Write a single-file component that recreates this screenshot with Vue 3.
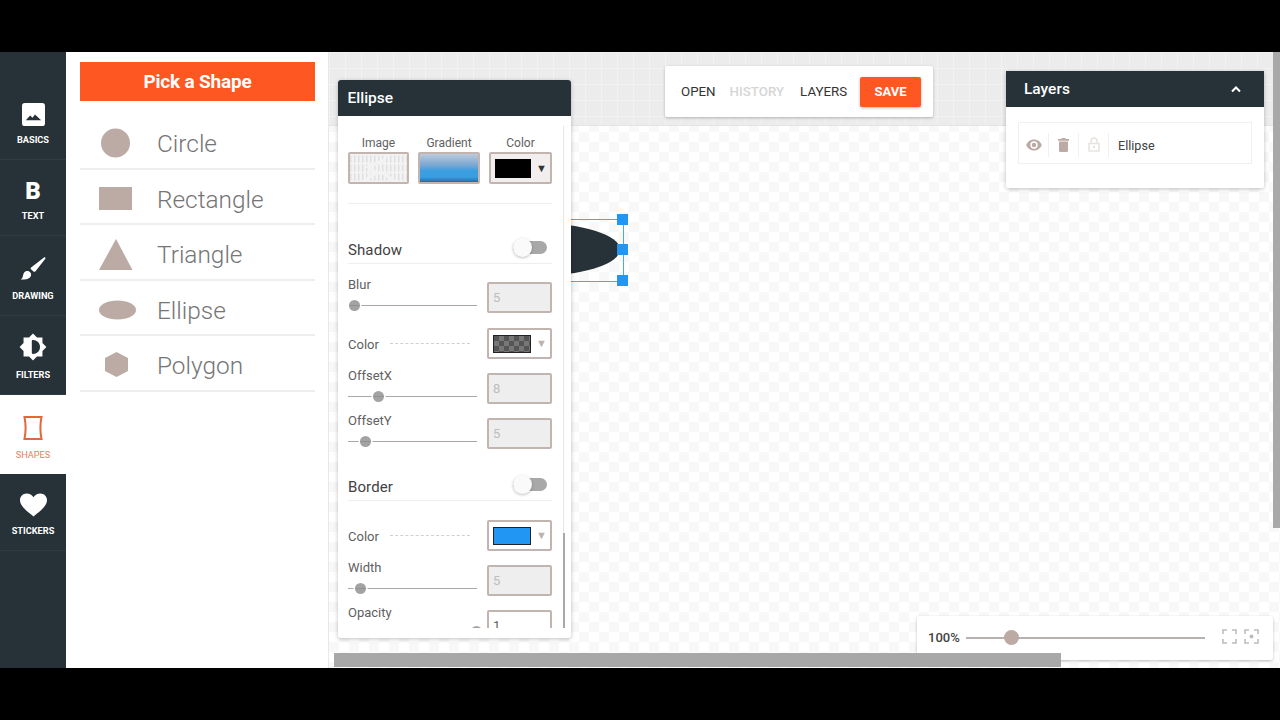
<template>
  <div class="screen">
    <div class="app">
      <nav class="sidebar">
        <div v-for="item in navItems" :key="item.label" class="nav-item" :class="[item.cls, { active: item.active }]">
          <svg v-if="item.icon === 'image'" class="nav-icon" width="23" height="23" viewBox="0 0 24 24">
            <path fill="#fff" d="M3 0h18a3 3 0 0 1 3 3v18a3 3 0 0 1-3 3H3a3 3 0 0 1-3-3V3a3 3 0 0 1 3-3z" />
            <path fill="#263238" d="M4 18l4.500-5 2.500 2.500 2.500-3.500 6.500 6z" />
          </svg>
          <span v-else-if="item.icon === 'bold'" class="nav-bold">B</span>
          <svg v-else-if="item.icon === 'brush'" class="nav-icon" width="26" height="26" viewBox="0 0 26 26">
            <path fill="#fff" d="M24 1.500c1-.6 1.800.3 1.300 1.200L15.500 15.200c-.6.700-1.400.8-2 .3l-2.500-2.200c-.6-.6-.5-1.300.1-1.900z" />
            <path fill="#fff" d="M6.500 15c2.200-.6 5 1.500 4.600 4-.4 3.200-4 5-10.600 4.500 2.500-1.200 2.200-3 2.700-4.800.4-1.800 1.600-3.200 3.300-3.700z" />
          </svg>
          <svg v-else-if="item.icon === 'filter'" class="nav-icon" width="28" height="28" viewBox="0 0 24 24">
            <path fill="#fff" d="M12 .5l3.400 3.400h4.700v4.700L23.500 12l-3.400 3.400v4.700h-4.700L12 23.500l-3.400-3.400H3.900v-4.700L.5 12l3.400-3.400V3.900h4.700z" />
            <path fill="#263238" d="M12 6c3.300 0 6 2.700 6 6s-2.700 6-6 6c-.8 0-1-.2-1-1V7c0-.8.2-1 1-1z" />
          </svg>
          <svg v-else-if="item.icon === 'shape'" class="nav-icon" width="20" height="26" viewBox="0 0 20 26">
            <path fill="none" stroke="#e0683a" stroke-width="2" d="M1.500 2h17c-1.400 7-1.400 15 0 22h-17c1.400-7 1.400-15 0-22z" />
          </svg>
          <svg v-else class="nav-icon" width="27" height="24" viewBox="0 0 28 24">
            <path fill="#fff" d="M14 24C5 16.500 0 12.500 0 7c0-4 3-7 7-7 3 0 5.500 1.500 7 4 1.500-2.500 4-4 7-4 4 0 7 3 7 7 0 5.500-5 9.500-14 17z" />
          </svg>
          <span class="nav-label">{{ item.label }}</span>
        </div>
      </nav>

      <aside class="shape-panel">
        <div class="pick-title">Pick a Shape</div>
        <ul class="shape-list">
          <li v-for="shape in shapes" :key="shape.name" class="shape-row">
            <span class="shape-icon">
              <svg width="36" height="34" viewBox="0 0 36 34">
                <circle v-if="shape.name === 'Circle'" cx="17.500" cy="16" r="14.500" />
                <rect v-else-if="shape.name === 'Rectangle'" x="1" y="5" width="33" height="23" />
                <polygon v-else-if="shape.name === 'Triangle'" points="18,1 34.500,32 1,32" />
                <ellipse v-else-if="shape.name === 'Ellipse'" cx="19.500" cy="17" rx="18.500" ry="9.500" />
                <polygon v-else points="18.500,3 30,9 30,22 18.500,28 7,22 7,9" />
              </svg>
            </span>
            <span class="shape-name">{{ shape.name }}</span>
          </li>
        </ul>
      </aside>

      <main class="canvas">
        <div class="canvas-top"></div>

        <div class="drawn-ellipse"></div>
        <div class="selection">
          <i class="handle h-top"></i>
          <i class="handle h-mid"></i>
          <i class="handle h-bot"></i>
        </div>

        <section class="props">
          <header class="props-head">Ellipse</header>
          <div class="props-body">
            <div class="fill-row">
              <div class="fill-col">
                <label>Image</label>
                <div class="swatch swatch-image">
                  <svg width="57" height="28" viewBox="0 0 57 28">
                    <path fill="none" stroke="#e0e0e0" stroke-width="7" stroke-dasharray="1.500 2.500" d="M0 5h57M0 14h57M0 23h57" />
                    <path fill="none" stroke="#f3f3f3" stroke-width="3" d="M12 28l14-9-8-6 16-7 3-6M46 28L33 19l-7 0" />
                  </svg>
                </div>
              </div>
              <div class="fill-col">
                <label>Gradient</label>
                <div class="swatch swatch-gradient"></div>
              </div>
              <div class="fill-col">
                <label>Color</label>
                <div class="swatch swatch-color">
                  <span class="black-chip"></span>
                  <span class="caret dark">▼</span>
                </div>
              </div>
            </div>

            <div class="section-title first">
              <span class="title-text">Shadow</span>
              <span class="toggle"><i></i></span>
            </div>

            <div class="field">
              <div class="field-left">
                <label>Blur</label>
                <div class="slider"><i :style="{ left: '1px' }"></i></div>
              </div>
              <div class="num">5</div>
            </div>

            <div class="color-field">
              <label>Color</label>
              <span class="dots"></span>
              <div class="pick">
                <span class="chip chip-checker"></span>
                <span class="caret">▼</span>
              </div>
            </div>

            <div class="field tight">
              <div class="field-left">
                <label>OffsetX</label>
                <div class="slider"><i :style="{ left: '25px' }"></i></div>
              </div>
              <div class="num">8</div>
            </div>

            <div class="field tight">
              <div class="field-left">
                <label>OffsetY</label>
                <div class="slider"><i :style="{ left: '12px' }"></i></div>
              </div>
              <div class="num">5</div>
            </div>

            <div class="section-title second">
              <span class="title-text">Border</span>
              <span class="toggle"><i></i></span>
            </div>

            <div class="color-field border-color">
              <label>Color</label>
              <span class="dots"></span>
              <div class="pick">
                <span class="chip chip-blue"></span>
                <span class="caret">▼</span>
              </div>
            </div>

            <div class="field tight">
              <div class="field-left">
                <label>Width</label>
                <div class="slider"><i :style="{ left: '7px' }"></i></div>
              </div>
              <div class="num">5</div>
            </div>

            <div class="field tight opacity-field">
              <div class="field-left">
                <label>Opacity</label>
                <div class="slider"><i :style="{ left: '123px' }"></i></div>
              </div>
              <div class="num on">1</div>
            </div>
          </div>
          <span class="props-track"><i></i></span>
        </section>

        <div class="top-menu">
          <span>OPEN</span>
          <span class="off">HISTORY</span>
          <span>LAYERS</span>
          <button class="save">SAVE</button>
        </div>

        <section class="layers">
          <header class="layers-head">
            <span>Layers</span>
            <svg width="12" height="8" viewBox="0 0 12 8"><path fill="none" stroke="#fff" stroke-width="2" d="M2 6.500l4-4 4 4" /></svg>
          </header>
          <div class="layers-body">
            <div class="layer-row">
              <span class="layer-btn">
                <svg width="16" height="12" viewBox="0 0 16 12"><path fill="#bcaaa4" d="M8 .5C4.500.5 1.500 2.700.2 6c1.300 3.300 4.300 5.500 7.800 5.500s6.500-2.200 7.800-5.500C14.500 2.700 11.500.5 8 .5zm0 9.200A3.700 3.700 0 1 1 8 2.300a3.700 3.700 0 0 1 0 7.400zM8 3.800a2.200 2.200 0 1 0 0 4.400 2.200 2.200 0 0 0 0-4.400z" /></svg>
              </span>
              <span class="layer-btn">
                <svg width="11" height="14" viewBox="0 0 11 14"><path fill="#bcaaa4" d="M1 3.500h9v9A1.500 1.500 0 0 1 8.500 14h-6A1.500 1.500 0 0 1 1 12.500zM0 1h3L4 0h3l1 1h3v1.800H0z" /></svg>
              </span>
              <span class="layer-btn">
                <svg width="12" height="15" viewBox="0 0 12 15"><path fill="none" stroke="#e8e3e1" stroke-width="1.600" d="M1 6.500h10v7.500H1zM3 6.500V4a3 3 0 0 1 6 0v2.500" /><circle cx="6" cy="10" r="1.200" fill="#e8e3e1" /></svg>
              </span>
              <span class="layer-name">Ellipse</span>
            </div>
          </div>
        </section>

        <div class="zoom-bar">
          <span class="zoom-value">100%</span>
          <div class="zoom-track"><i></i></div>
          <svg class="zoom-icon" width="15" height="15" viewBox="0 0 15 15">
            <path fill="none" stroke="#bdbdbd" stroke-width="1.600" d="M1 5V1h4M10 1h4v4M14 10v4h-4M5 14H1v-4" />
          </svg>
          <svg class="zoom-icon" width="15" height="15" viewBox="0 0 15 15">
            <path fill="none" stroke="#bdbdbd" stroke-width="1.600" d="M1 5V1h4M10 1h4v4M14 10v4h-4M5 14H1v-4" />
            <circle cx="7.500" cy="7.500" r="2" fill="#bdbdbd" />
          </svg>
        </div>

        <span class="scroll-h"></span>
        <span class="scroll-v"></span>
      </main>
    </div>
  </div>
</template>

<script setup>
const navItems = [
  { label: 'BASICS', icon: 'image', cls: 'first' },
  { label: 'TEXT', icon: 'bold', cls: 'short' },
  { label: 'DRAWING', icon: 'brush' },
  { label: 'FILTERS', icon: 'filter', cls: 'filters' },
  { label: 'SHAPES', icon: 'shape', active: true },
  { label: 'STICKERS', icon: 'heart', cls: 'stickers' }
]

const shapes = [
  { name: 'Circle' },
  { name: 'Rectangle' },
  { name: 'Triangle' },
  { name: 'Ellipse' },
  { name: 'Polygon' }
]
</script>

<style>
html,
body {
  margin: 0;
  background: #000;
}
</style>

<style scoped>
.screen {
  width: 1280px;
  height: 720px;
  padding: 52px 0;
  box-sizing: border-box;
  background: #000;
  overflow: hidden;
  font-family: Roboto, "Liberation Sans", sans-serif;
}

.app {
  display: flex;
  height: 616px;
}

/* left nav */
.sidebar {
  width: 66px;
  flex: none;
  background: #263238;
  display: flex;
  flex-direction: column;
}

.nav-item {
  height: 80px;
  box-sizing: border-box;
  display: flex;
  flex-direction: column;
  align-items: center;
  justify-content: flex-end;
  padding-bottom: 13px;
  border-bottom: 1px solid #303c43;
  color: #fff;
}

.nav-item.first {
  height: 108px;
}

.nav-item.short {
  height: 76px;
}

.nav-item.filters {
  height: 79px;
}

.nav-item.stickers {
  height: 77px;
}

.nav-item.active {
  background: #fff;
  color: #e0815c;
  border-bottom: 0;
  height: 79px;
}

.nav-icon {
  display: block;
}

.nav-bold {
  font-size: 24px;
  font-weight: 900;
  line-height: 26px;
  margin-bottom: -2px;
}

.nav-label {
  font-size: 9.200px;
  font-weight: 700;
  line-height: 12px;
  margin-top: 8px;
}

.nav-item.active .nav-label {
  font-weight: 400;
}

/* shape chooser */
.shape-panel {
  width: 263px;
  flex: none;
  box-sizing: border-box;
  background: #fff;
  padding: 10px 13px 0 14px;
  border-right: 1px solid #e8e8e8;
}

.pick-title {
  height: 39px;
  line-height: 39px;
  background: #ff5722;
  color: #fff;
  text-align: center;
  font-size: 19px;
  font-weight: 700;
  letter-spacing: -0.2px;
}

.shape-list {
  list-style: none;
  margin: 13px 0 0;
  padding: 0;
}

.shape-row {
  height: 55.500px;
  box-sizing: border-box;
  display: flex;
  align-items: center;
  padding-top: 6px;
  border-bottom: 2px solid #eeeeee;
}

.shape-icon {
  width: 77px;
  padding-left: 18px;
  box-sizing: border-box;
  flex: none;
  display: flex;
}

.shape-icon svg {
  fill: #bcaaa4;
  overflow: visible;
}

.shape-name {
  font-size: 24.400px;
  font-weight: 300;
  color: #757575;
}

/* canvas */
.canvas {
  position: relative;
  flex: 1;
  overflow: hidden;
  background-color: #fff;
  background-image:
    linear-gradient(45deg, #f8f8f8 25%, transparent 25%, transparent 75%, #f8f8f8 75%),
    linear-gradient(45deg, #f8f8f8 25%, transparent 25%, transparent 75%, #f8f8f8 75%);
  background-size: 20px 20px;
  background-position: 0 0, 10px 10px;
}

.canvas-top {
  height: 74px;
  background-color: #ececec;
  background-image:
    linear-gradient(#f2f2f2 1px, transparent 1px),
    linear-gradient(90deg, #f2f2f2 1px, transparent 1px);
  background-size: 16px 16px;
  border-bottom: 1px solid #e4e4e4;
  box-sizing: border-box;
}

.drawn-ellipse {
  position: absolute;
  left: 120px;
  top: 171px;
  width: 171px;
  height: 53px;
  border-radius: 50%;
  background: #263238;
}

.selection {
  position: absolute;
  left: 230px;
  top: 167px;
  width: 63px;
  height: 61px;
  border: 1px solid #4aa8f0;
  box-sizing: content-box;
}

.handle {
  position: absolute;
  right: -5px;
  width: 11px;
  height: 11px;
  background: #2196f3;
}

.h-top {
  top: -6px;
}

.h-mid {
  top: 24px;
}

.h-bot {
  top: 55px;
}

/* properties */
.props {
  position: absolute;
  left: 9px;
  top: 28px;
  width: 233px;
  height: 558px;
  background: #fff;
  border-radius: 3px;
  box-shadow: 0 1px 4px rgba(0, 0, 0, 0.25);
  overflow: hidden;
}

.props-head {
  height: 36px;
  line-height: 36px;
  background: #263238;
  color: #fff;
  padding-left: 9.500px;
  font-size: 15.500px;
  font-weight: 500;
}

.props-body {
  height: 512px;
  padding: 20px 19px 0 10px;
  box-sizing: border-box;
  overflow: hidden;
}

.props-track {
  position: absolute;
  left: 225px;
  top: 46px;
  bottom: 10px;
  width: 1px;
  background: #e6e6e6;
}

.props-track i {
  position: absolute;
  left: 0;
  bottom: 0;
  height: 95px;
  width: 2px;
  background: #a8a8a8;
}

.fill-row {
  display: flex;
  justify-content: space-between;
  padding-bottom: 19px;
  border-bottom: 1px solid #eeeeee;
}

.fill-col {
  display: flex;
  flex-direction: column;
  align-items: center;
}

.fill-col label {
  font-size: 12px;
  line-height: 14px;
  color: #616161;
  margin-bottom: 2px;
}

label {
  color: #616161;
}

.swatch {
  height: 32px;
  box-sizing: border-box;
  border: 2px solid #c2b5b0;
  border-radius: 2px;
  overflow: hidden;
}

.swatch-image {
  width: 61px;
  background: #f3f3f3;
}

.swatch-image svg {
  display: block;
}

.swatch-gradient {
  width: 62px;
  background: linear-gradient(#bccbdc 0%, #7aa7d2 40%, #3a9ee0 60%, #3a9ee0 82%, #2e6a99 100%);
}

.swatch-color {
  width: 63px;
  background: #f1eeed;
  display: flex;
  align-items: center;
  padding-left: 4px;
}

.black-chip {
  width: 36px;
  height: 19px;
  background: #000;
}

.caret {
  font-size: 11px;
  color: #bdb3af;
  margin-left: 5px;
  line-height: 1;
}

.caret.dark {
  color: #333;
}

.section-title {
  display: flex;
  align-items: center;
  justify-content: space-between;
  height: 28px;
  border-bottom: 1px solid #eeeeee;
  font-size: 15px;
  color: #424242;
  letter-spacing: 0.1px;
}

.title-text {
  padding-top: 2px;
}

.section-title.first {
  margin-top: 31px;
}

.section-title.second {
  margin-top: 23px;
}

.toggle {
  position: relative;
  display: block;
  width: 34px;
  height: 13px;
  margin-right: 5px;
  border-radius: 7px;
  background: #a8a8a8;
  margin-bottom: 4px;
}

.toggle i {
  position: absolute;
  left: 0;
  top: -3px;
  width: 19px;
  height: 19px;
  border-radius: 50%;
  background: #fafafa;
  box-shadow: 0 1px 3px rgba(0, 0, 0, 0.25);
}

.field {
  display: flex;
  justify-content: space-between;
  margin-top: 18px;
}

.field.tight {
  margin-top: 14px;
}

.field-left {
  width: 129px;
  margin-top: -5px;
}

.field-left label {
  display: block;
  font-size: 13px;
  line-height: 15px;
}

.slider {
  position: relative;
  height: 1px;
  margin-top: 13px;
  background: #aba6a4;
}

.opacity-field .slider {
  margin-top: 11px;
}

.slider i {
  position: absolute;
  top: -5px;
  width: 11px;
  height: 11px;
  border-radius: 50%;
  background: rgba(140, 140, 140, 0.8);
  box-shadow: 0 0 0 1.500px #fff;
}

.num {
  width: 65px;
  height: 31px;
  box-sizing: border-box;
  border: 2px solid #c2b5b0;
  border-radius: 2px;
  background: #eeeeee;
  color: #bdbdbd;
  font-size: 13px;
  line-height: 28px;
  padding-left: 4px;
}

.num.on {
  background: #fff;
  color: #616161;
}

.color-field {
  display: flex;
  align-items: center;
  margin-top: 15px;
  font-size: 13px;
}

.color-field label {
  padding-top: 2px;
}

.color-field.border-color {
  margin-top: 19px;
}

.dots {
  width: 80px;
  margin: 0 15px 0 11px;
  border-top: 1px dashed #d0d0d0;
}

.pick {
  margin-left: auto;
  width: 65px;
  height: 31px;
  box-sizing: border-box;
  border: 2px solid #c2b5b0;
  border-radius: 2px;
  display: flex;
  align-items: center;
  padding-left: 4px;
}

.chip {
  width: 38px;
  height: 18px;
  border: 1px solid #222;
  box-sizing: border-box;
}

.chip-blue {
  background: #2196f3;
}

.chip-checker {
  background-color: #555;
  background-image:
    linear-gradient(45deg, #777 25%, transparent 25%, transparent 75%, #777 75%),
    linear-gradient(45deg, #777 25%, transparent 25%, transparent 75%, #777 75%);
  background-size: 10px 10px;
  background-position: 0 0, 5px 5px;
}

/* top menu */
.top-menu {
  position: absolute;
  left: 336px;
  top: 14px;
  width: 268px;
  height: 51px;
  box-sizing: border-box;
  background: #fff;
  border-radius: 2px;
  box-shadow: 0 1px 3px rgba(0, 0, 0, 0.25);
  display: flex;
  align-items: center;
  padding-left: 16px;
  font-size: 13.300px;
  color: #333;
}

.top-menu span {
  margin-right: 14px;
}

.top-menu .off {
  color: #d6d6d6;
  font-weight: 500;
  margin-right: 16px;
}

.save {
  width: 61px;
  height: 30px;
  border: 0;
  border-radius: 2px;
  background: #ff5722;
  color: #fff;
  font-family: inherit;
  font-size: 13px;
  font-weight: 700;
  margin-left: -1px;
  box-shadow: 0 1px 3px rgba(0, 0, 0, 0.3);
}

/* layers */
.layers {
  position: absolute;
  left: 677px;
  top: 19px;
  width: 258px;
  height: 117px;
  background: #fff;
  border-radius: 2px;
  box-shadow: 0 1px 4px rgba(0, 0, 0, 0.25);
}

.layers-head {
  height: 36px;
  background: #263238;
  color: #fff;
  display: flex;
  align-items: center;
  justify-content: space-between;
  padding: 0 22px 0 18px;
  font-size: 15.500px;
  font-weight: 500;
}

.layers-body {
  padding: 15px 12px 0;
}

.layer-row {
  height: 42px;
  box-sizing: border-box;
  border: 1px solid #f0f0f0;
  display: flex;
  align-items: center;
  padding-top: 3px;
}

.layer-btn {
  width: 30px;
  height: 24px;
  flex: none;
  display: flex;
  align-items: center;
  justify-content: center;
  border-right: 1px solid #f0f0f0;
  box-sizing: border-box;
}

.layer-name {
  font-size: 12.600px;
  color: #424242;
  margin-left: 9px;
  padding-top: 1px;
}

/* zoom */
.zoom-bar {
  position: absolute;
  left: 588px;
  top: 564px;
  width: 356px;
  height: 44px;
  box-sizing: border-box;
  background: #fff;
  border-radius: 2px;
  box-shadow: 0 1px 3px rgba(0, 0, 0, 0.25);
  display: flex;
  align-items: center;
  padding-left: 11px;
}

.zoom-value {
  font-size: 13px;
  color: #424242;
  width: 38px;
  font-weight: 500;
  margin-bottom: 2px;
}

.zoom-track {
  position: relative;
  width: 239px;
  height: 2px;
  background: #b7b2b0;
  margin-right: 17px;
}

.zoom-track i {
  position: absolute;
  left: 38px;
  top: -7px;
  width: 15px;
  height: 15px;
  border-radius: 50%;
  background: #bcaaa4;
}

.zoom-icon {
  margin-right: 7px;
  margin-bottom: 4px;
  flex: none;
}

.scroll-h {
  position: absolute;
  left: 5px;
  bottom: 1px;
  width: 727px;
  height: 14px;
  background: #a8a8a8;
}

.scroll-v {
  position: absolute;
  right: 0;
  top: 0;
  width: 7px;
  height: 476px;
  background: #a8a8a8;
}
</style>
